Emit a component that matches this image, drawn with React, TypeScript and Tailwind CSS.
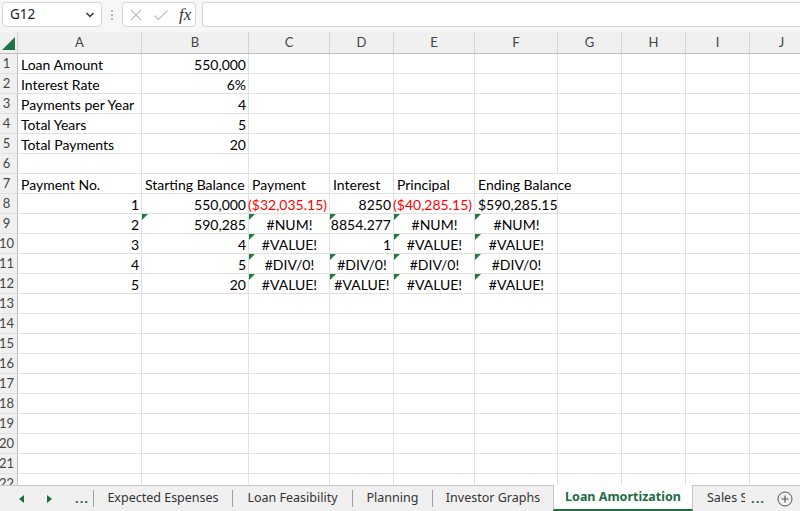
import React from "react";

type Align = "l" | "r" | "c";
type Cell = { v: string; a?: Align; red?: boolean; tri?: boolean; spill?: boolean } | null;

const cols = [
  { l: "A", w: 124 },
  { l: "B", w: 107 },
  { l: "C", w: 81 },
  { l: "D", w: 64 },
  { l: "E", w: 81 },
  { l: "F", w: 83 },
  { l: "G", w: 64 },
  { l: "H", w: 64 },
  { l: "I", w: 64 },
  { l: "J", w: 64 },
];

const L = (v: string): Cell => ({ v, a: "l" });
const R = (v: string, tri = false): Cell => ({ v, a: "r", tri });
const E = (v: string, tri = true): Cell => ({ v, a: "c", tri });

const data: Record<number, Cell[]> = {
  1: [L("Loan Amount"), R("550,000")],
  2: [L("Interest Rate"), R("6%")],
  3: [L("Payments per Year"), R("4")],
  4: [L("Total Years"), R("5")],
  5: [L("Total Payments"), R("20")],
  7: [
    L("Payment No."),
    L("Starting Balance"),
    L("Payment"),
    L("Interest"),
    L("Principal"),
    { v: "Ending Balance", a: "l", spill: true },
  ],
  8: [
    R("1"),
    R("550,000"),
    { v: "($32,035.15)", a: "r", red: true },
    R("8250"),
    { v: "($40,285.15)", a: "r", red: true },
    L("$590,285.15"),
  ],
  9: [R("2"), R("590,285", true), E("#NUM!"), R("8854.277", true), E("#NUM!"), E("#NUM!")],
  10: [R("3"), R("4"), E("#VALUE!"), R("1"), E("#VALUE!"), E("#VALUE!")],
  11: [R("4"), R("5"), E("#DIV/0!"), E("#DIV/0!"), E("#DIV/0!"), E("#DIV/0!")],
  12: [R("5"), R("20"), E("#VALUE!"), E("#VALUE!"), E("#VALUE!"), E("#VALUE!")],
};

const rowNums = Array.from({ length: 22 }, (_, i) => i + 1);

const cellFont = { fontFamily: "Lato, 'Liberation Sans', sans-serif" };
const uiFont = { fontFamily: "'Noto Sans', 'Open Sans', sans-serif" };

// small green "error" flag in a cell's top-left corner
function Tri() {
  return (
    <svg className="absolute left-0 top-0" width="6" height="6" viewBox="0 0 6 6">
      <polygon points="0,0 6,0 0,6" fill="#1f7a3d" />
    </svg>
  );
}

export default function App() {
  return (
    <div className="flex h-[511px] w-[800px] flex-col overflow-hidden bg-white" style={uiFont}>
      {/* formula bar */}
      <div className="flex h-[32px] shrink-0 items-start bg-[#f7f7f7] pt-[2px]">
        <div className="ml-[2px] flex h-[25px] w-[100px] items-center justify-between rounded-[4px] border border-[#d6d6d6] bg-white pl-[7px] pr-[6px]">
          <span className="text-[13.5px] text-[#222]">G12</span>
          <svg width="10" height="8" viewBox="0 0 10 8">
            <path d="M1.5 2 L5 5.5 L8.5 2" fill="none" stroke="#333" strokeWidth="1.5" />
          </svg>
        </div>
        <div className="flex h-[25px] w-[20px] items-center justify-center">
          <svg width="4" height="12" viewBox="0 0 4 12">
            <circle cx="2" cy="2" r="1" fill="#999" />
            <circle cx="2" cy="6" r="1" fill="#999" />
            <circle cx="2" cy="10" r="1" fill="#999" />
          </svg>
        </div>
        <div className="flex h-[25px] w-[74px] items-center rounded-[4px] border border-[#d6d6d6] bg-white pl-[6px]">
          <svg width="14" height="14" viewBox="0 0 14 14">
            <path d="M2 2 L12 12 M12 2 L2 12" stroke="#bdbdbd" strokeWidth="1.1" />
          </svg>
          <svg className="ml-[10px]" width="16" height="14" viewBox="0 0 16 14">
            <path d="M1.5 7.5 L5.5 11.5 L14.5 2.5" fill="none" stroke="#bdbdbd" strokeWidth="1.1" />
          </svg>
          <span
            className="ml-[10px] text-[17px] italic text-[#333]"
            style={{ fontFamily: "'Liberation Serif', serif" }}
          >
            fx
          </span>
        </div>
        <div className="ml-[6px] h-[25px] flex-1 rounded-l-[4px] border border-r-0 border-[#d6d6d6] bg-white" />
      </div>

      {/* column headers */}
      <div className="flex h-[22px] shrink-0 border-b border-[#bfbfbf] bg-[#f0f0f0]">
        <div className="relative w-[18px] shrink-0 border-r border-[#d4d4d4]">
          <svg className="absolute left-[2px] top-[5px]" width="13" height="13" viewBox="0 0 13 13">
            <polygon points="13,0 13,13 0,13" fill="#217346" />
          </svg>
        </div>
        {cols.map((c) => (
          <div
            key={c.l}
            className="flex shrink-0 items-center justify-center border-r border-[#d4d4d4] text-[13px] text-[#444]"
            style={{ width: c.w, ...cellFont }}
          >
            {c.l}
          </div>
        ))}
      </div>

      {/* rows */}
      <div className="flex-1 overflow-hidden" style={cellFont}>
        {rowNums.map((r) => {
          const cells = data[r] || [];
          return (
            <div key={r} className="flex h-[20px]">
              <div className="flex w-[18px] shrink-0 items-center justify-center border-b border-r border-b-[#e1e1e1] border-r-[#bfbfbf] bg-[#f0f0f0] pr-[4px] pt-[1px] text-[13px] text-[#444]">
                {r}
              </div>
              {cols.map((c, i) => {
                const cell = cells[i] ?? null;
                return (
                  <div
                    key={c.l}
                    className={`relative flex h-full shrink-0 items-center border-b border-[#e1e1e1] pl-[3px] pr-[2px] pt-[1px] ${
                      cell?.spill ? "" : "border-r"
                    } ${
                      cell?.a === "r"
                        ? "justify-end"
                        : cell?.a === "c"
                        ? "justify-center"
                        : "justify-start"
                    }`}
                    style={{ width: c.w }}
                  >
                    {cell?.tri && <Tri />}
                    {cell && (
                      <span
                        className={`relative z-10 whitespace-nowrap text-[14px] ${
                          cell.red ? "text-[#ff0000]" : "text-black"
                        }`}
                      >
                        {cell.v}
                      </span>
                    )}
                  </div>
                );
              })}
            </div>
          );
        })}
      </div>

      {/* sheet tabs */}
      <div className="relative flex h-[26px] shrink-0 items-stretch border-t border-[#c6c6c6] bg-[#f0f0f0] text-[12.5px] text-[#333]">
        <div className="flex w-[93px] shrink-0 items-center">
          <svg className="ml-[19px]" width="6" height="8" viewBox="0 0 6 8">
            <polygon points="5,0 5,8 0,4" fill="#1e6b41" />
          </svg>
          <svg className="ml-[22px]" width="6" height="8" viewBox="0 0 6 8">
            <polygon points="0,0 0,8 5,4" fill="#1e6b41" />
          </svg>
          <span className="ml-[22px] text-[13px] font-bold tracking-[1px] text-[#1e6b41]">...</span>
        </div>
        <div className="my-[4px] w-px bg-[#a0a0a0]" />
        <div className="flex w-[138px] items-center justify-center">Expected Espenses</div>
        <div className="my-[4px] w-px bg-[#a0a0a0]" />
        <div className="flex w-[119px] items-center justify-center">Loan Feasibility</div>
        <div className="my-[4px] w-px bg-[#a0a0a0]" />
        <div className="flex w-[79px] items-center justify-center">Planning</div>
        <div className="my-[4px] w-px bg-[#a0a0a0]" />
        <div className="flex w-[120px] items-center justify-center">Investor Graphs</div>
        <div className="-mt-px flex w-[140px] items-center justify-center border-x border-b-2 border-x-[#c6c6c6] border-b-[#1e6b41] bg-white font-bold text-[#1e6b41]">
          Loan Amortization
        </div>
        <div className="flex flex-1 items-center overflow-hidden pl-[14px]">
          <span className="w-[38px] shrink-0 overflow-hidden whitespace-nowrap">Sales Summary</span>
          <span className="ml-[6px] shrink-0 text-[13px] font-bold tracking-[1px] text-[#1e6b41]">...</span>
          <svg className="ml-[12px] shrink-0" width="16" height="16" viewBox="0 0 16 16">
            <circle cx="8" cy="8" r="7" fill="none" stroke="#555" strokeWidth="1" />
            <path d="M8 4.5 V11.5 M4.5 8 H11.5" stroke="#555" strokeWidth="1.2" />
          </svg>
        </div>
      </div>
    </div>
  );
}
